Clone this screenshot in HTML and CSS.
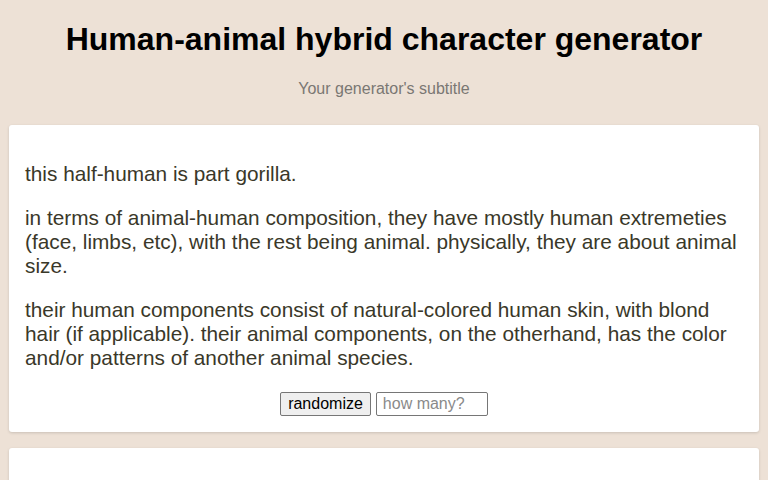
FILE: index.html
```html
<!DOCTYPE html>
<html>
<head>
<meta charset="utf-8">
<link rel="stylesheet" href="styles.css">
</head>
<body>
<header class="head">
  <h1 class="title">Human-animal hybrid character generator</h1>
  <p class="subtitle">Your generator's subtitle</p>
</header>
<main class="cards">
  <section class="card">
    <div class="output">
      <p>this half-human is part gorilla.</p>
      <p>in terms of animal-human composition, they have mostly human extremeties (face, limbs, etc), with the rest being animal. physically, they are about animal size.</p>
      <p>their human components consist of natural-colored human skin, with blond hair (if applicable). their animal components, on the otherhand, has the color and/or patterns of another animal species.</p>
    </div>
    <div class="controls">
      <button class="btn">randomize</button>
      <input class="count" type="text" placeholder="how many?">
    </div>
  </section>
  <section class="card card-next"></section>
</main>
</body>
</html>
```
FILE: styles.css
```css
html, body {
  margin: 0;
  padding: 0;
  background: #ede1d6;
  font-family: "Liberation Sans", Arial, sans-serif;
}
.head {
  text-align: center;
  padding-top: 20px;
}
.title {
  margin: 0;
  font-size: 32px;
  line-height: 38px;
  font-weight: bold;
  color: #000;
}
.subtitle {
  margin: 21px 0 0;
  font-size: 16px;
  line-height: 20px;
  color: #7a7773;
}
.cards {
  display: flex;
  flex-direction: column;
  gap: 16px;
  padding: 26px 9px 0;
}
.card {
  background: #fff;
  border-radius: 3px;
  box-shadow: 0 1px 3px rgba(0,0,0,0.15);
  padding: 16px;
}
.output {
  color: #3a3829;
  font-size: 20.8px;
  line-height: 24px;
}
.output p {
  margin: 21px 0 0;
}
.output p:first-child {
  margin-top: 21px;
}
.output p + p {
  margin-top: 20px;
}
.output p:last-child {
  margin-bottom: 22px;
}
.controls {
  display: flex;
  justify-content: center;
  gap: 5px;
}
.btn {
  font-family: "Liberation Sans", Arial, sans-serif;
  font-size: 16px;
  height: 24px;
  padding: 0 7px;
  background: #efefef;
  border: 1px solid #767676;
  border-radius: 2px;
  color: #000;
}
.count {
  font-family: "Liberation Sans", Arial, sans-serif;
  font-size: 16px;
  width: 112px;
  height: 24px;
  box-sizing: border-box;
  padding: 0 6px;
  border: 1px solid #767676;
  border-radius: 2px;
}
.count::placeholder {
  color: #8a8a8a;
}
.card-next {
  height: 60px;
}
```
